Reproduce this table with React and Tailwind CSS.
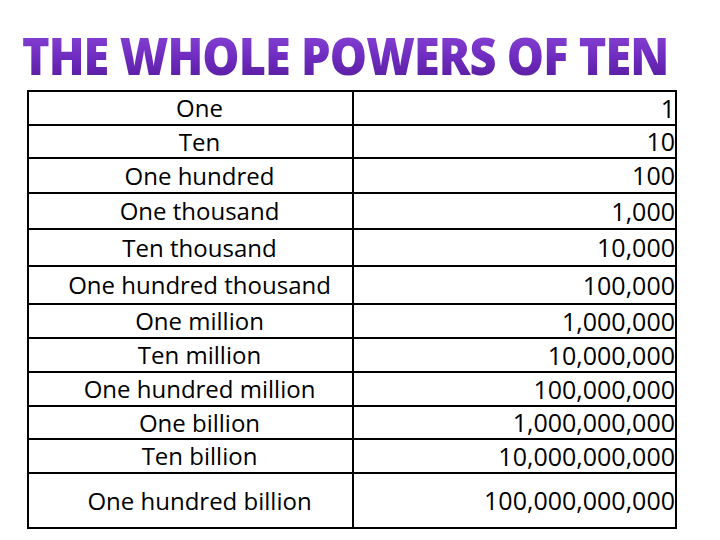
import React from "react";

const rows = [
  { name: "One", value: "1", h: "h-[34px]" },
  { name: "Ten", value: "10", h: "h-[33px]" },
  { name: "One hundred", value: "100", h: "h-[35px]" },
  { name: "One thousand", value: "1,000", h: "h-[36px]" },
  { name: "Ten thousand", value: "10,000", h: "h-[37px]" },
  { name: "One hundred thousand", value: "100,000", h: "h-[38px]" },
  { name: "One million", value: "1,000,000", h: "h-[34px]" },
  { name: "Ten million", value: "10,000,000", h: "h-[34px]" },
  { name: "One hundred million", value: "100,000,000", h: "h-[34px]" },
  { name: "One billion", value: "1,000,000,000", h: "h-[33px]" },
  { name: "Ten billion", value: "10,000,000,000", h: "h-[34px]" },
  { name: "One hundred billion", value: "100,000,000,000", h: "h-[55px]" },
];

const App = () => {
  return (
    <div className="w-[720px] h-[540px] bg-white overflow-hidden font-['Open_Sans',sans-serif] text-black">
      {/* Title */}
      <div className="h-[90px] flex justify-center pt-[24px] pr-[30px]">
        <h1 className="inline-block scale-x-[0.9] text-[52px] leading-[62px] font-extrabold tracking-[-1px] bg-gradient-to-b from-[#8e48d8] via-[#6f2cc0] to-[#4f1690] bg-clip-text text-transparent whitespace-nowrap">
          THE WHOLE POWERS OF TEN
        </h1>
      </div>

      {/* Table */}
      <div className="pl-[27px]">
        <table className="w-[650px] border-collapse border-2 border-black table-fixed">
          <tbody>
            {rows.map((row) => (
              <tr key={row.name} className={row.h}>
                <td className="w-[325px] border-2 border-black text-center text-[24px] leading-none p-0 pl-[18px]">
                  {row.name}
                </td>
                <td className="border-2 border-black text-right text-[25px] leading-none p-0">
                  {row.value}
                </td>
              </tr>
            ))}
          </tbody>
        </table>
      </div>
    </div>
  );
};

export default App;
